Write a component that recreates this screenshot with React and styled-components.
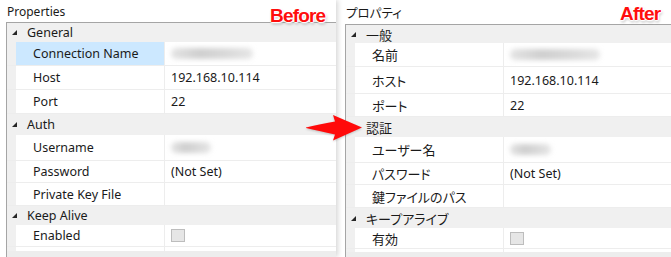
import React from "react"
import styled, { createGlobalStyle } from "styled-components"

// Two property-grid screenshots side by side, with the before/after callouts on top

const GlobalStyle = createGlobalStyle`
  html, body {
    margin: 0;
    padding: 0;
    background: #fff;
  }
  body {
    font-family: "Noto Sans", "Noto Sans CJK JP", sans-serif;
    font-feature-settings: "palt";
    color: #1a1a1a;
  }
`

const before = {
  title: "Properties",
  titleHeight: 22,
  width: 336,
  inset: 6,
  labelSize: 12.5,
  rows: [
    { cat: true, label: "General", h: 19 },
    { label: "Connection Name", h: 24, selected: true, redacted: 82 },
    { label: "Host", value: "192.168.10.114", h: 24 },
    { label: "Port", value: "22", h: 24 },
    { cat: true, label: "Auth", h: 21 },
    { label: "Username", h: 26, redacted: 40 },
    { label: "Password", value: "(Not Set)", h: 22 },
    { label: "Private Key File", h: 23 },
    { cat: true, label: "Keep Alive", h: 19 },
    { label: "Enabled", h: 22, check: true },
    { label: "", h: 5 },
  ],
}

const after = {
  title: "プロパティ",
  titleHeight: 24,
  width: 335,
  inset: 9,
  labelSize: 13,
  rows: [
    { cat: true, label: "一般", h: 18 },
    { label: "名前", h: 24, redacted: 90 },
    { label: "ホスト", value: "192.168.10.114", h: 27 },
    { label: "ポート", value: "22", h: 23 },
    { cat: true, label: "認証", h: 20 },
    { label: "ユーザー名", h: 26, redacted: 41 },
    { label: "パスワード", value: "(Not Set)", h: 22 },
    { label: "鍵ファイルのパス", h: 23 },
    { cat: true, label: "キープアライブ", h: 20 },
    { label: "有効", h: 21, check: true },
    { label: "", h: 4 },
  ],
}

export default function App() {
  return (
    <>
      <GlobalStyle />
      <Screen>
        <PropertyPane data={before} front />
        <PropertyPane data={after} />

        <Callout $left={270} $top={6}>Before</Callout>
        <Callout $left={620} $top={4}>After</Callout>
        <Arrow viewBox="0 0 65 36" width="65" height="36">
          <path
            d="M6 19.5 C14 17.5 24 15.5 35 13.5 L33 7 L62 19.5 L33 32.5 L35 26.5 C24 24 14 22 6 20 Z"
            fill="#ff0a0a"
          />
        </Arrow>
      </Screen>
    </>
  )
}

function PropertyPane({ data, front }) {
  return (
    <Pane $width={data.width} $inset={data.inset} $front={front}>
      <PaneTitle $h={data.titleHeight} $size={data.labelSize - 0.5}>
        {data.title}
      </PaneTitle>
      <Grid>
        {data.rows.map((row, i) =>
          row.cat ? (
            <CategoryRow key={i} $h={row.h} $size={data.labelSize}>
              <Expander viewBox="0 0 5 5" width="5" height="5">
                <polygon points="5,0 5,5 0,5" fill="#262626" />
              </Expander>
              {row.label}
            </CategoryRow>
          ) : (
            <PropRow key={i} $h={row.h}>
              <Gutter />
              <LabelCell $selected={row.selected} $size={data.labelSize}>
                {row.label}
              </LabelCell>
              <ValueCell>
                {row.value}
                {row.redacted && <Redacted $w={row.redacted} />}
                {row.check && <CheckBox />}
              </ValueCell>
            </PropRow>
          )
        )}
      </Grid>
    </Pane>
  )
}

const Screen = styled.div`
  position: relative;
  width: 671px;
  height: 257px;
  overflow: hidden;
  display: flex;
  background: #fff;
`

const Pane = styled.div`
  position: relative;
  z-index: ${(p) => (p.$front ? 1 : 0)};
  flex: 0 0 ${(p) => p.$width}px;
  box-sizing: border-box;
  display: flex;
  flex-direction: column;
  padding-left: ${(p) => p.$inset}px;
  background: #fff;
  overflow: hidden;
  box-shadow: ${(p) => (p.$front ? "2px 0 5px rgba(0, 0, 0, 0.16)" : "none")};
`

const PaneTitle = styled.div`
  height: ${(p) => p.$h}px;
  flex: none;
  display: flex;
  align-items: center;
  padding-left: 1px;
  font-size: ${(p) => p.$size}px;
`

const Grid = styled.div`
  flex: 1;
  display: flex;
  flex-direction: column;
  border-top: 1px solid #a5a5a5;
  border-left: 1px solid #a5a5a5;
  background: #ededed;
`

const CategoryRow = styled.div`
  height: ${(p) => p.$h}px;
  flex: none;
  display: flex;
  align-items: center;
  background: #f0f0f0;
  font-size: ${(p) => p.$size}px;
  white-space: nowrap;
`

const Expander = styled.svg`
  flex: none;
  margin: 0 10px 0 5px;
`

const PropRow = styled.div`
  height: ${(p) => p.$h}px;
  flex: none;
  box-sizing: border-box;
  display: flex;
  background: #fff;
  border-bottom: 1px solid #ededed;
  font-size: 12.5px;
  white-space: nowrap;
`

const Gutter = styled.div`
  width: 9px;
  flex: none;
  background: #f0f0f0;
`

const LabelCell = styled.div`
  width: 149px;
  flex: none;
  display: flex;
  align-items: center;
  padding-left: 17px;
  box-sizing: border-box;
  border-right: 1px solid #ededed;
  font-size: ${(p) => p.$size}px;
  background: ${(p) => (p.$selected ? "#cce8ff" : "#fff")};
`

const ValueCell = styled.div`
  flex: 1;
  display: flex;
  align-items: center;
  padding-left: 6px;
`

const Redacted = styled.span`
  display: block;
  width: ${(p) => p.$w}px;
  height: 11px;
  border-radius: 6px;
  background: linear-gradient(90deg, #e4e4e4, #cfcfcf 35%, #d8d8d8 65%, #e6e6e6);
  filter: blur(2.5px);
`

const CheckBox = styled.span`
  display: block;
  width: 12px;
  height: 11px;
  border: 1px solid #bdbdbd;
  background: #e6e6e6;
`

const Callout = styled.div`
  position: absolute;
  z-index: 3;
  left: ${(p) => p.$left}px;
  top: ${(p) => p.$top}px;
  font-family: "Liberation Sans", Arial, sans-serif;
  font-weight: 700;
  font-size: 19px;
  line-height: 19px;
  letter-spacing: -0.8px;
  color: #ff0d0d;
  text-shadow: 0 0 1px #fff, 1px 0 1px #fff, -1px 0 1px #fff, 0 1px 1px #fff,
    0 -1px 1px #fff, 1px 1px 2px #fff, -1px -1px 2px #fff,
    1px 2px 3px rgba(0, 0, 0, 0.35);
`

const Arrow = styled.svg`
  position: absolute;
  z-index: 3;
  left: 300px;
  top: 108px;
  filter: drop-shadow(0 1px 1px rgba(0, 0, 0, 0.2));
`
